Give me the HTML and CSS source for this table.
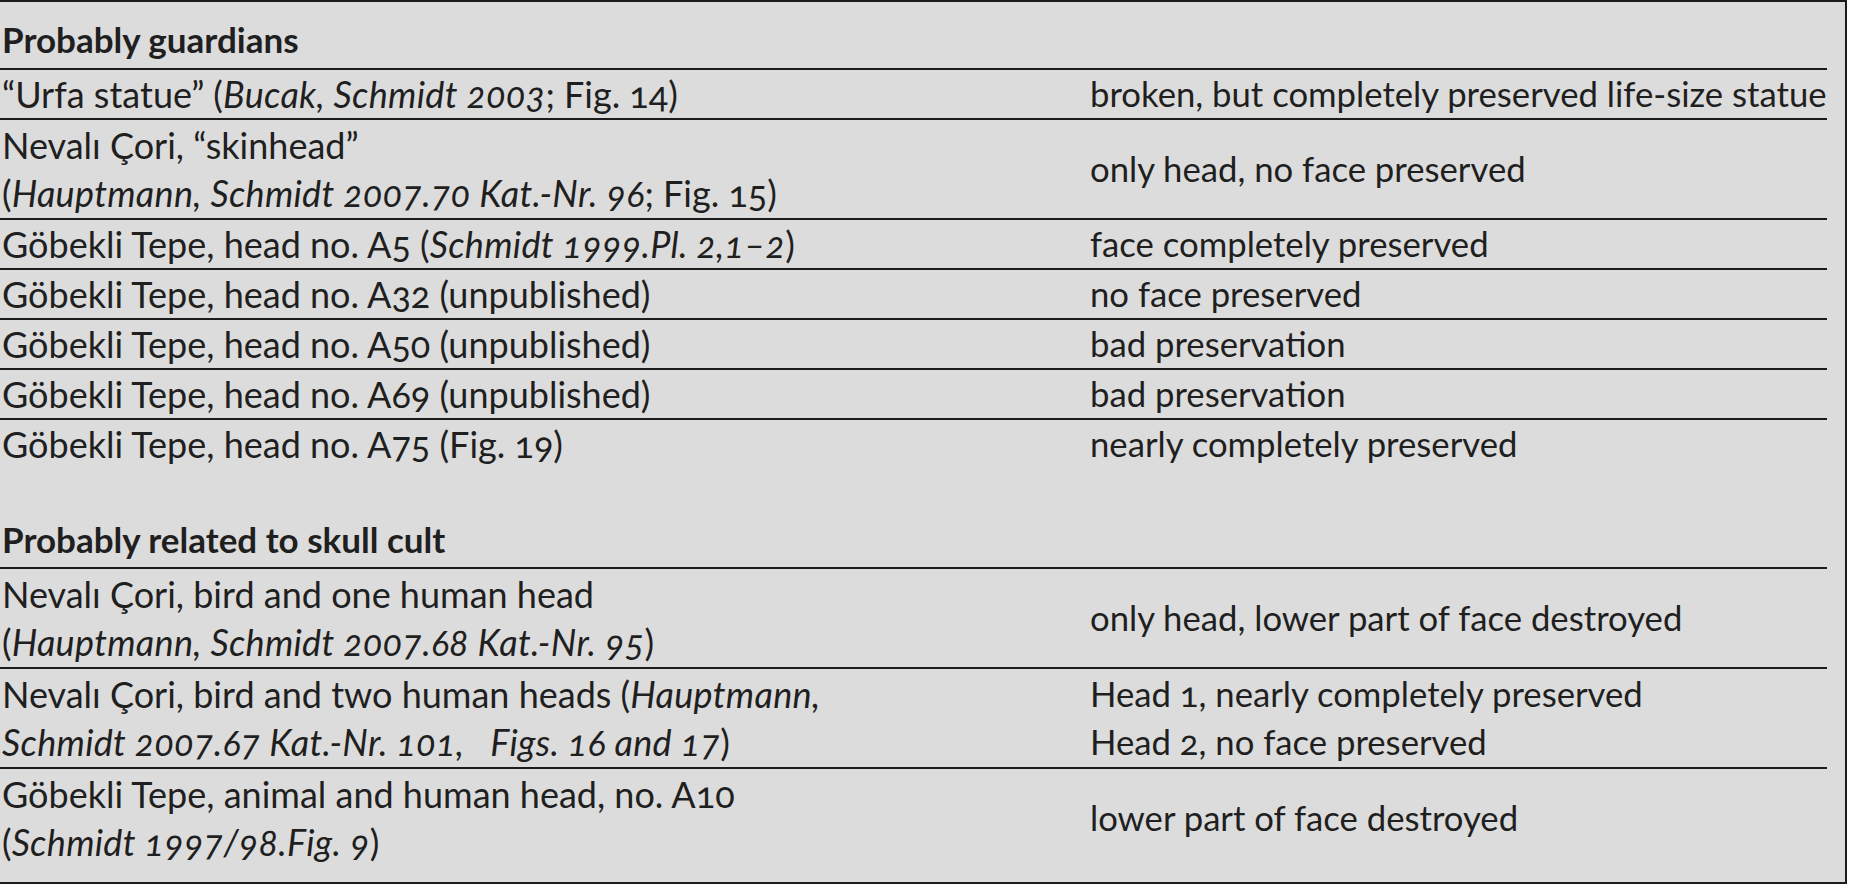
FILE: index.html
```html
<!DOCTYPE html>
<html lang="en">
<head>
<meta charset="utf-8">
<title>Heads table</title>
<link rel="stylesheet" href="styles.css">
</head>
<body>
<div class="frame">
  <table class="tbl">
    <colgroup><col class="c1"><col class="c2"></colgroup>
    <tbody>
      <tr class="head head-first"><th colspan="2">Probably guardians</th></tr>
      <tr><td>“Urfa statue” (<i>Bucak, Schmidt 2003</i>; Fig. 14)</td><td>broken, but completely preserved life-size statue</td></tr>
      <tr class="two"><td>Nevalı Çori, “skinhead”<br>(<i>Hauptmann, Schmidt 2007.70 Kat.-Nr. 96</i>; Fig. 15)</td><td>only head, no face preserved</td></tr>
      <tr><td>Göbekli Tepe, head no. A5 (<i>Schmidt 1999.Pl. 2,1–2</i>)</td><td>face completely preserved</td></tr>
      <tr><td>Göbekli Tepe, head no. A32 (unpublished)</td><td>no face preserved</td></tr>
      <tr><td>Göbekli Tepe, head no. A50 (unpublished)</td><td>bad preservation</td></tr>
      <tr><td>Göbekli Tepe, head no. A69 (unpublished)</td><td>bad preservation</td></tr>
      <tr class="open"><td>Göbekli Tepe, head no. A75 (Fig. 19)</td><td>nearly completely preserved</td></tr>
      <tr class="head head-second"><th colspan="2">Probably related to skull cult</th></tr>
      <tr class="two"><td>Nevalı Çori, bird and one human head<br>(<i>Hauptmann, Schmidt 2007.68 Kat.-Nr. 95</i>)</td><td>only head, lower part of face destroyed</td></tr>
      <tr class="two"><td>Nevalı Çori, bird and two human heads (<i>Hauptmann,</i><br><i>Schmidt 2007.67 Kat.-Nr. 101,&nbsp;&nbsp; Figs. 16 and 17</i>)</td><td>Head 1, nearly completely preserved<br>Head 2, no face preserved</td></tr>
      <tr class="two last"><td>Göbekli Tepe, animal and human head, no. A10<br>(<i>Schmidt 1997/98.Fig. 9</i>)</td><td>lower part of face destroyed</td></tr>
    </tbody>
  </table>
</div>
</body>
</html>
```
FILE: styles.css
```css
html, body {
  margin: 0;
  padding: 0;
  background: #ffffff;
}

.frame {
  width: 1827px;
  padding-right: 18px;
  border-top: 2px solid #1c1c1c;
  border-right: 2px solid #1c1c1c;
  border-bottom: 2px solid #1c1c1c;
  background: #dcdcdc;
}

.tbl {
  width: 1827px;
  border-collapse: collapse;
  table-layout: fixed;
  font-family: "Lato", "Open Sans", sans-serif;
  font-size: 36px;
  color: #1f1f1f;
  font-variant-numeric: oldstyle-nums;
}

.c1 { width: 1088px; }
.c2 { width: 739px; }

.tbl td,
.tbl th {
  padding: 0 0 0 2px;
  line-height: 48px;
  white-space: nowrap;
  vertical-align: middle;
  text-align: left;
}

.tbl td + td {
  padding-left: 2px;
  font-size: 34.7px;
}

.tbl tr {
  border-bottom: 2px solid #1c1c1c;
}

.tbl tr.open,
.tbl tr.last {
  border-bottom: none;
}

.tbl tr.two td {
  padding-top: 1px;
  padding-bottom: 1px;
}

.tbl tr.last td {
  padding-bottom: 16px;
}

.tbl th {
  font-weight: 700;
  font-size: 35px;
  padding-bottom: 4px;
}

.tbl tr.head-first th {
  padding-top: 13px;
  padding-bottom: 5px;
}

.tbl tr.head-second th {
  padding-top: 47px;
}

.tbl i {
  font-style: italic;
  letter-spacing: 0.3px;
}
```
